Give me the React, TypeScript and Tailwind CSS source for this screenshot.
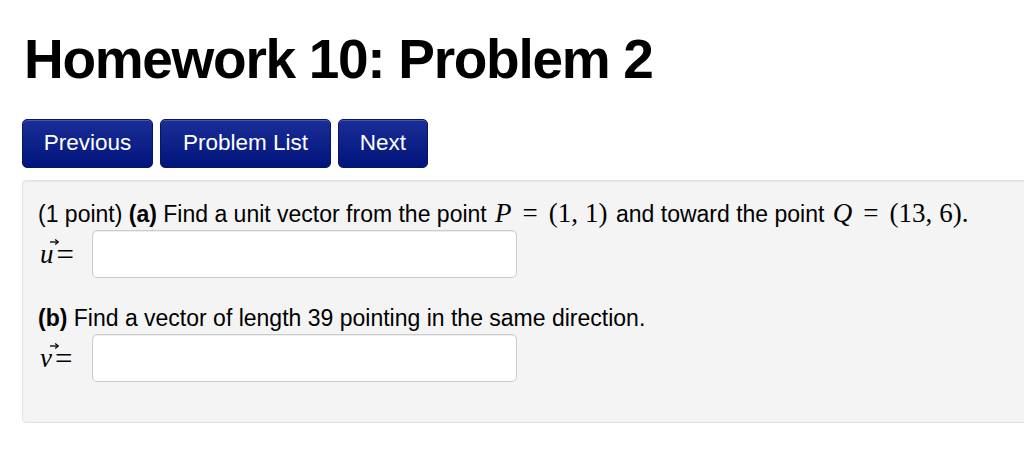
import React from "react";

const serif = "font-['Liberation_Serif','Times_New_Roman',serif]";

function VecLabel({ letter }: { letter: string }) {
  return (
    <span className={`flex items-center w-[54px] shrink-0 h-[48px] pl-[2px] ${serif} text-[27px] leading-none`}>
      <span className="relative inline-block italic">
        {letter}
        <svg
          className="absolute -top-[2px] left-[10px]"
          width="9"
          height="6"
          viewBox="0 0 9 6"
        >
          <path d="M0 3 H7.5" stroke="#000" strokeWidth="1.3" />
          <path d="M5.2 0.6 L8.3 3 L5.2 5.4" fill="none" stroke="#000" strokeWidth="1.3" />
        </svg>
      </span>
      <span className="ml-[3px] text-[31px]">=</span>
    </span>
  );
}

function AnswerBox({ letter }: { letter: string }) {
  return (
    <div className="flex items-center mt-[2px]">
      <VecLabel letter={letter} />
      <input
        type="text"
        className="w-[425px] h-[48px] bg-white border border-[#cccccc] rounded-[5px] shadow-[inset_0_1px_1px_rgba(0,0,0,0.075)] outline-none px-2"
      />
    </div>
  );
}

function Eq() {
  return <span className="mx-[11px]">=</span>;
}

export default function App() {
  const buttons = [
    { label: "Previous", w: "w-[131px]" },
    { label: "Problem List", w: "w-[171px]" },
    { label: "Next", w: "w-[90px]" },
  ];

  return (
    <div className="w-[1024px] h-[455px] overflow-hidden bg-white text-black font-['Liberation_Sans',Arial,Helvetica,sans-serif]">
      <div className="pl-[22px]">
        <h1 className="pl-[2px] pt-[29px] text-[55px] leading-[60px] tracking-[-1.3px] font-bold">
          Homework 10: Problem 2
        </h1>

        <div className="flex gap-[7px] mt-[30px]">
          {buttons.map((b) => (
            <button
              key={b.label}
              className={`${b.w} h-[49px] rounded-[5px] bg-gradient-to-b from-[#1b2d96] to-[#02137c] border border-[#0a1560] text-white text-[22.5px] leading-none shadow-[inset_0_1px_0_rgba(255,255,255,0.2)]`}
            >
              {b.label}
            </button>
          ))}
        </div>

        <div className="mt-[12px] w-[1020px] h-[243px] bg-[#f4f4f4] border border-[#e1e1e1] rounded-[4px] shadow-[inset_0_1px_1px_rgba(0,0,0,0.05)] pl-[15px] pt-[18px]">
          <p className="text-[23px] leading-[28px] whitespace-nowrap">
            (1 point) <b>(a)</b> Find a unit vector from the point{" "}
            <span className={`${serif} text-[27px] mx-[2px]`}>
              <i>P</i>
              <Eq />
              (1,<span className="ml-[7px]">1</span>)
            </span>{" "}
            and toward the point{" "}
            <span className={`${serif} text-[27px] mx-[2px]`}>
              <i>Q</i>
              <Eq />
              (13,<span className="ml-[7px]">6</span>).
            </span>
          </p>
          <AnswerBox letter="u" />

          <p className="text-[23px] leading-[28px] mt-[26px]">
            <b>(b)</b> Find a vector of length 39 pointing in the same direction.
          </p>
          <AnswerBox letter="v" />
        </div>
      </div>
    </div>
  );
}
